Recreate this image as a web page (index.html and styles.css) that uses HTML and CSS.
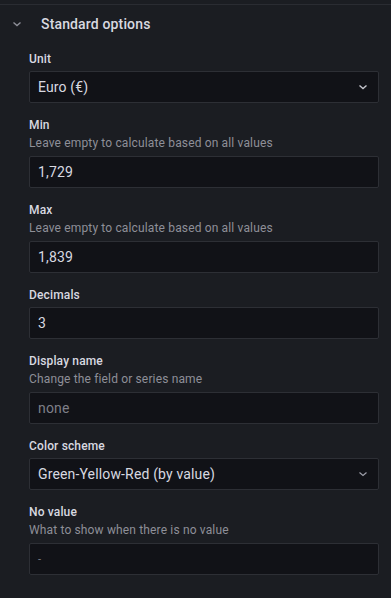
FILE: index.html
```html
<!DOCTYPE html>
<html lang="en">
<head>
  <meta charset="UTF-8">
  <title>Standard options</title>
  <link rel="stylesheet" href="styles.css">
</head>
<body>
  <div class="options-group">
    <div class="group-header">
      <span class="toggle">
        <svg width="10" height="10" viewBox="0 0 10 10"><polyline points="1.5,3.5 5,6.5 8.5,3.5" fill="none" stroke="#8e8f98" stroke-width="1.4"/></svg>
      </span>
      <span class="group-title">Standard options</span>
    </div>

    <div class="group-body">
      <div class="field">
        <div class="label">Unit</div>
        <div class="input select">
          <span>Euro (€)</span>
          <svg width="10" height="10" viewBox="0 0 10 10"><polyline points="1.5,3.5 5,6.5 8.5,3.5" fill="none" stroke="#c4c5cc" stroke-width="1.4"/></svg>
        </div>
      </div>

      <div class="field">
        <div class="label">Min</div>
        <div class="desc">Leave empty to calculate based on all values</div>
        <div class="input">1,729</div>
      </div>

      <div class="field">
        <div class="label">Max</div>
        <div class="desc">Leave empty to calculate based on all values</div>
        <div class="input">1,839</div>
      </div>

      <div class="field">
        <div class="label">Decimals</div>
        <div class="input">3</div>
      </div>

      <div class="field">
        <div class="label">Display name</div>
        <div class="desc">Change the field or series name</div>
        <div class="input placeholder">none</div>
      </div>

      <div class="field">
        <div class="label">Color scheme</div>
        <div class="input select">
          <span>Green-Yellow-Red (by value)</span>
          <svg width="10" height="10" viewBox="0 0 10 10"><polyline points="1.5,3.5 5,6.5 8.5,3.5" fill="none" stroke="#9fa0ab" stroke-width="1.2"/></svg>
        </div>
      </div>

      <div class="field">
        <div class="label">No value</div>
        <div class="desc">What to show when there is no value</div>
        <div class="input placeholder dash">-</div>
      </div>
    </div>
  </div>
</body>
</html>
```

FILE: styles.css
```css
body {
  margin: 0;
  padding-top: 4px;
  background-color: #1b1d22;
  font-family: Roboto, "Noto Sans", sans-serif;
  letter-spacing: 0.15px;
  color: #d8d9e0;
}
.options-group {
  border-top: 1px solid #2a2c32;
}
.group-header {
  display: flex;
  align-items: center;
  height: 38px;
  padding-left: 12px;
}
.toggle {
  display: flex;
  width: 10px;
  margin-right: 19px;
}
.group-title {
  font-size: 14px;
  font-weight: 500;
  color: #d8d9e0;
}
.group-body {
  padding: 9px 12px 0 29px;
}
.field {
  margin-bottom: 15px;
}
.label {
  font-size: 12px;
  font-weight: 500;
  line-height: 15px;
  color: #d8d9e0;
}
.desc {
  font-size: 12px;
  line-height: 15px;
  margin-top: 3px;
  color: #8e8f98;
}
.label + .input {
  margin-top: 4px;
}
.desc + .input {
  margin-top: 5px;
}
.input {
  box-sizing: border-box;
  height: 32px;
  display: flex;
  align-items: center;
  padding: 0 8px;
  background-color: #111217;
  border: 1px solid #2d2f35;
  border-radius: 2px;
  font-size: 14px;
  color: #d8d9e0;
}
.select {
  justify-content: space-between;
  padding-right: 10px;
}
.placeholder {
  color: #7e7f88;
}
.dash {
  font-size: 11px;
}
```
